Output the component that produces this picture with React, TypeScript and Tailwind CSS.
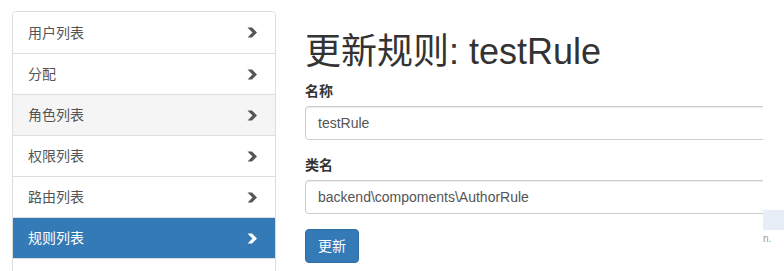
const items = ['用户列表', '分配', '角色列表', '权限列表', '路由列表', '规则列表', ''];

function Chevron({ active }: { active: boolean }) {
  return (
    <svg width="10" height="11" viewBox="0 0 10 11" className={active ? 'fill-white' : 'fill-[#555]'}>
      <polygon points="0.5,0.5 5,0.5 10,5.5 5,10.5 0.5,10.5 5.5,5.5" />
    </svg>
  );
}

export default function App() {
  return (
    <div
      className="relative w-[784px] h-[271px] overflow-hidden bg-white text-[#333] text-[14px]"
      style={{ fontFamily: '"Liberation Sans", Arial, "Noto Sans CJK SC", sans-serif' }}
    >
      <div className="flex pt-[11px] pl-[12px]">
        <div className="w-[264px] shrink-0">
          <div className="border border-[#ddd] rounded-t-[4px] overflow-hidden">
            {items.map((label, i) => {
              const active = i === 5;
              const hover = i === 2;
              return (
                <div
                  key={i}
                  className={`flex items-center justify-between h-[41px] px-[15px] ${i > 0 ? 'border-t border-[#ddd]' : ''} ${
                    active ? 'bg-[#337ab7] border-[#337ab7] text-white' : hover ? 'bg-[#f5f5f5] text-[#555]' : 'bg-white text-[#555]'
                  }`}
                >
                  <span className="leading-[20px]">{label}</span>
                  {label && (
                    <span className="mr-[3px]">
                      <Chevron active={active} />
                    </span>
                  )}
                </div>
              );
            })}
          </div>
        </div>

        <div className="ml-[29px] w-[520px] shrink-0">
          <h1 className="text-[36px] font-normal leading-[40px] mt-[21px] mb-[9px] text-[#333]">更新规则: testRule</h1>
          <div className="mb-[15px]">
            <label className="block font-bold leading-[20px] mb-[5px]">名称</label>
            <div className="h-[34px] border border-[#ccc] rounded-[4px] px-[12px] flex items-center text-[#555] shadow-[inset_0_1px_1px_rgba(0,0,0,0.075)]">
              testRule
            </div>
          </div>
          <div className="mb-[15px]">
            <label className="block font-bold leading-[20px] mb-[5px]">类名</label>
            <div className="h-[34px] border border-[#ccc] rounded-[4px] px-[12px] flex items-center text-[#555] shadow-[inset_0_1px_1px_rgba(0,0,0,0.075)]">
              backend\compoments\AuthorRule
            </div>
          </div>
          <button className="h-[34px] px-[12px] bg-[#337ab7] border border-[#2e6da4] rounded-[4px] text-white leading-[20px]">
            更新
          </button>
        </div>
      </div>

      <div className="absolute top-0 right-0 w-[21px] h-full bg-white">
        <div className="mt-[210px] h-[20px] bg-[#e8eef7]" />
        <div className="mt-[3px] text-[10px] leading-[12px] text-[#999]">n.</div>
      </div>
    </div>
  );
}
